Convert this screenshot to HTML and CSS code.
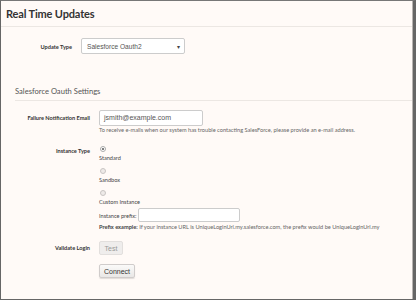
FILE: index.html
```html
<!DOCTYPE html>
<html>
<head>
<meta charset="utf-8">
<link rel="stylesheet" href="styles.css">
</head>
<body>
<div class="frame">
  <header class="head"><h1 class="title">Real Time Updates</h1></header>

  <div class="row type-row">
    <div class="lab lab-narrow">Update Type</div>
    <div class="select"><span>Salesforce Oauth2</span><span class="caret">&#9662;</span></div>
  </div>

  <h2 class="section-title">Salesforce Oauth Settings</h2>

  <div class="row email-row">
    <div class="lab lab-mid">Failure Notification Email</div>
    <div class="ctrl">
      <div class="input email">jsmith@example.com</div>
      <div class="help">To receive e-mails when our system has trouble contacting SalesForce, please provide an e-mail address.</div>
    </div>
  </div>

  <div class="row inst-row">
    <div class="lab lab-top">Instance Type</div>
    <div class="ctrl">
      <div class="opt"><span class="radio checked"></span><span class="opt-text">Standard</span></div>
      <div class="opt"><span class="radio"></span><span class="opt-text">Sandbox</span></div>
      <div class="opt"><span class="radio"></span><span class="opt-text">Custom Instance</span></div>
      <div class="prefix-row"><span class="prefix-label">Instance prefix:</span><div class="input prefix"></div></div>
      <div class="help"><b>Prefix example:</b> If your instance URL is UniqueLoginUrl.my.salesforce.com, the prefix would be UniqueLoginUrl.my</div>
    </div>
  </div>

  <div class="row validate-row">
    <div class="lab lab-mid">Validate Login</div>
    <div class="ctrl"><button class="btn btn-test" disabled>Test</button></div>
  </div>

  <div class="row connect-row">
    <div class="lab"></div>
    <div class="ctrl"><button class="btn btn-connect">Connect</button></div>
  </div>
</div>
</body>
</html>
```

FILE: styles.css
```css
* { box-sizing: border-box; }
html, body { margin: 0; padding: 0; }
body {
  width: 416px;
  height: 300px;
  background: #fffaf7;
  font-family: Lato, "Open Sans", sans-serif;
  color: #333;
}
.frame {
  width: 416px;
  height: 300px;
  border-top: 1px solid #777;
  border-left: 1px solid #666;
  border-bottom: 1px solid #666;
  border-right: 3px solid #666;
  box-shadow: inset -1px 0 0 #b8b4b2;
  background: #fffaf7;
  overflow: hidden;
}
.head {
  height: 26px;
  border-bottom: 1px solid #ece7e3;
  padding-left: 5px;
  margin-right: 1px;
  display: flex;
  align-items: center;
}
.title {
  margin: 0;
  font-size: 11px;
  font-weight: 700;
  color: #333;
  letter-spacing: -0.15px;
}
.row { display: flex; }
.lab {
  width: 89px;
  flex: none;
  text-align: right;
  font-size: 5.6px;
  font-weight: 700;
  color: #333;
  margin-right: 9px;
}
.type-row { margin-top: 11px; align-items: center; }
.lab-narrow { width: 71px; margin-right: 9px; }
.select {
  width: 104px;
  height: 16px;
  background: #fff;
  border: 1px solid #ccc;
  border-radius: 2px;
  display: flex;
  align-items: center;
  justify-content: space-between;
  padding: 0 4px 0 5px;
  font-family: "Liberation Sans", Arial, sans-serif;
  font-size: 6.6px;
  color: #555;
}
.caret { font-size: 6px; color: #444; }
.section-title {
  margin: 32px 1px 0 14px;
  padding-bottom: 4px;
  border-bottom: 1px solid #ece7e3;
  font-size: 7.6px;
  line-height: 10px;
  font-weight: 400;
  color: #555;
}
.email-row { margin-top: 9px; }
.ctrl { display: flex; flex-direction: column; align-items: flex-start; }
.input {
  background: #fff;
  border: 1px solid #ccc;
  border-radius: 2px;
}
.email {
  width: 104px;
  height: 16px;
  padding-left: 4px;
  font-family: "Liberation Sans", Arial, sans-serif;
  font-size: 7px;
  line-height: 14px;
  color: #555;
}
.help {
  margin-top: 1px;
  font-size: 5.65px;
  line-height: 6px;
  color: #666;
  white-space: nowrap;
}
.help b { font-weight: 700; color: #444; }
.inst-row { margin-top: 13px; }
.lab-top { line-height: 6px; margin-top: 2px; }
.opt { display: flex; flex-direction: column; align-items: flex-start; margin-bottom: 7px; }
.opt:nth-child(3) { margin-bottom: 3px; }
.radio {
  width: 6px;
  height: 6px;
  margin-left: 1px;
  border-radius: 50%;
  border: 1px solid #c9c5c3;
  background: #eeeae8;
  position: relative;
}
.radio.checked { background: #fff; border-color: #aaa; }
.radio.checked::after {
  content: "";
  position: absolute;
  left: 1px; top: 1px;
  width: 2px; height: 2px;
  border-radius: 50%;
  background: #555;
}
.opt-text {
  margin-top: 3px;
  font-size: 5.6px;
  line-height: 6px;
  color: #444;
}
.prefix-row { display: flex; align-items: center; }
.prefix-label { font-size: 5.6px; color: #444; margin-right: 2px; }
.prefix { width: 102px; height: 14px; }
.inst-row .help { margin-top: 2px; }
.validate-row { margin-top: 11px; }
.lab-mid { line-height: 14px; }
.email-row .lab-mid { line-height: 16px; }
.btn {
  height: 14px;
  padding: 0;
  border: 1px solid #d0cccb;
  border-radius: 2px;
  background: linear-gradient(#fbfaf9, #e9e7e6);
  font-family: "Liberation Sans", Arial, sans-serif;
  font-size: 7px;
  color: #333;
}
.btn-test { width: 24px; color: #999; background: #efedec; border-color: #e2dfdd; }
.connect-row { margin-top: 9px; }
.btn-connect { width: 36px; box-shadow: 0 1px 1px rgba(0,0,0,0.12); }
```
